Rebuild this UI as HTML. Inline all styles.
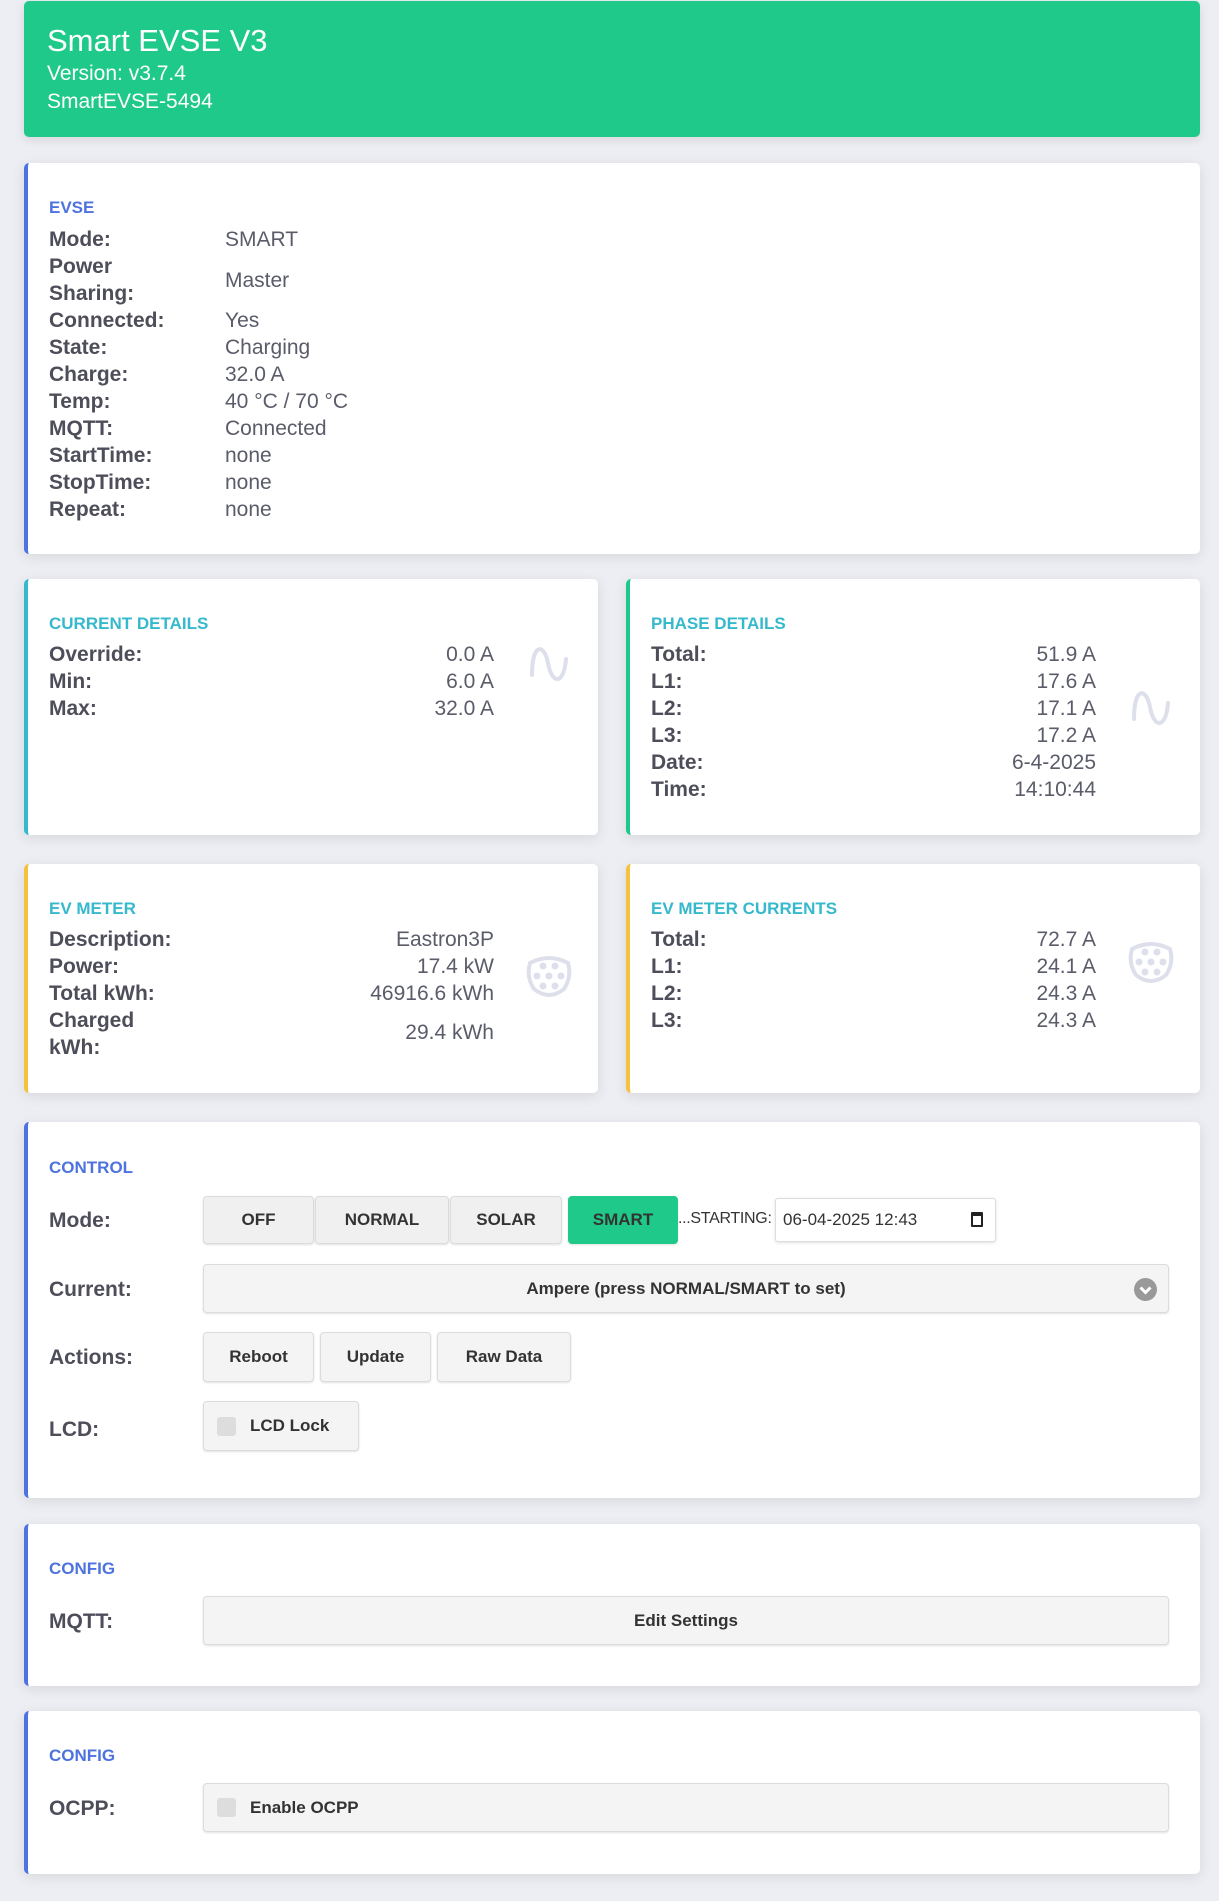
<!DOCTYPE html>
<html><head><meta charset="utf-8"><style>
*{box-sizing:border-box;margin:0;padding:0}
body{width:1219px;height:1901px;background:#eceef3;font-family:"Liberation Sans",sans-serif;color:#5a5c69;position:relative;overflow:hidden}
.card{position:absolute;background:#fff;border-radius:5px;box-shadow:0 3px 12px rgba(58,59,69,.12);border-left:4px solid #4e73df}
.hdr{position:absolute;left:24px;top:1px;width:1176px;height:136px;background:#1fc98a;border-radius:5px;color:#fff;box-shadow:0 3px 10px rgba(0,0,0,.1)}
.hdr .t{position:absolute;left:23px;top:22px;font-size:31px;line-height:36px}
.hdr .v{position:absolute;left:23px;top:60px;font-size:21px;line-height:26px}
.hdr .s{position:absolute;left:23px;top:88px;font-size:21px;line-height:26px}
.ttl{position:absolute;left:21px;font-weight:bold;font-size:17px;text-transform:uppercase}
.blue{color:#4e73df}.teal{color:#36b9cc}
.lab{position:absolute;left:21px;font-weight:bold;font-size:21px;line-height:27px;color:#4d4e59}
.val{position:absolute;font-size:21px;line-height:27px;color:#5a5c69}
.btn{position:absolute;background:#f0f0f0;border:1px solid #dcdcdc;border-radius:4px;box-shadow:0 1px 2px rgba(0,0,0,.12);font-weight:bold;font-size:17px;color:#333;display:flex;align-items:center;justify-content:center}
.row{position:absolute;left:21px;font-weight:bold;font-size:21px;color:#4d4e59}
.cb{display:inline-block;width:19px;height:19px;background:#ddd;border-radius:3px;margin-right:14px}
</style></head><body>
<div class="hdr"><div class="t">Smart EVSE V3</div><div class="v">Version: v3.7.4</div><div class="s">SmartEVSE-5494</div></div>

<div class="card" style="left:24px;top:163px;width:1176px;height:391px">
<div class="ttl blue" style="top:35px">EVSE</div>
<div class="lab" style="top:63px">Mode:</div><div class="val" style="left:197px;top:63px">SMART</div>
<div class="lab" style="top:90px">Power<br>Sharing:</div><div class="val" style="left:197px;top:104px">Master</div>
<div class="lab" style="top:144px">Connected:<br>State:<br>Charge:<br>Temp:<br>MQTT:<br>StartTime:<br>StopTime:<br>Repeat:</div>
<div class="val" style="left:197px;top:144px">Yes<br>Charging<br>32.0 A<br>40 °C / 70 °C<br>Connected<br>none<br>none<br>none</div>
</div>

<div class="card" style="left:24px;top:579px;width:574px;height:256px;border-left-color:#36b9cc">
<div class="ttl teal" style="top:35px">Current Details</div>
<div class="lab" style="top:62px">Override:<br>Min:<br>Max:</div>
<div class="val" style="left:296px;width:170px;text-align:right;top:62px">0.0 A<br>6.0 A<br>32.0 A</div>
<svg style="position:absolute;left:496px;top:62px" width="52" height="48" viewBox="0 0 52 48"><path d="M8 34 C8 2,20 2,24 22 C28 44,40 44,42 18" fill="none" stroke="#dddfeb" stroke-width="4" stroke-linecap="round"/></svg>
</div>

<div class="card" style="left:626px;top:579px;width:574px;height:256px;border-left-color:#1cc88a">
<div class="ttl teal" style="top:35px">Phase Details</div>
<div class="lab" style="top:62px">Total:<br>L1:<br>L2:<br>L3:<br>Date:<br>Time:</div>
<div class="val" style="left:296px;width:170px;text-align:right;top:62px">51.9 A<br>17.6 A<br>17.1 A<br>17.2 A<br>6-4-2025<br>14:10:44</div>
<svg style="position:absolute;left:496px;top:106px" width="52" height="48" viewBox="0 0 52 48"><path d="M8 34 C8 2,20 2,24 22 C28 44,40 44,42 18" fill="none" stroke="#dddfeb" stroke-width="4" stroke-linecap="round"/></svg>
</div>

<div class="card" style="left:24px;top:864px;width:574px;height:229px;border-left-color:#f6c23e">
<div class="ttl teal" style="top:35px">EV Meter</div>
<div class="lab" style="top:62px">Description:<br>Power:<br>Total kWh:<br>Charged<br>kWh:</div>
<div class="val" style="left:266px;width:200px;text-align:right;top:62px">Eastron3P<br>17.4 kW<br>46916.6 kWh</div>
<div class="val" style="left:266px;width:200px;text-align:right;top:155px">29.4 kWh</div>
<svg style="position:absolute;left:498px;top:91px" width="46" height="44" viewBox="0 0 46 44"><path d="M4 8 Q23 -2 42 8 Q46 22 38 34 Q23 46 8 34 Q0 22 4 8Z" fill="none" stroke="#dddfeb" stroke-width="4"/><g fill="#dddfeb"><circle cx="17" cy="11" r="3.5"/><circle cx="29" cy="11" r="3.5"/><circle cx="11" cy="21" r="3.5"/><circle cx="23" cy="21" r="3.5"/><circle cx="35" cy="21" r="3.5"/><circle cx="17" cy="31" r="3.5"/><circle cx="29" cy="31" r="3.5"/></g></svg>
</div>

<div class="card" style="left:626px;top:864px;width:574px;height:229px;border-left-color:#f6c23e">
<div class="ttl teal" style="top:35px">EV Meter Currents</div>
<div class="lab" style="top:62px">Total:<br>L1:<br>L2:<br>L3:</div>
<div class="val" style="left:296px;width:170px;text-align:right;top:62px">72.7 A<br>24.1 A<br>24.3 A<br>24.3 A</div>
<svg style="position:absolute;left:498px;top:77px" width="46" height="44" viewBox="0 0 46 44"><path d="M4 8 Q23 -2 42 8 Q46 22 38 34 Q23 46 8 34 Q0 22 4 8Z" fill="none" stroke="#dddfeb" stroke-width="4"/><g fill="#dddfeb"><circle cx="17" cy="11" r="3.5"/><circle cx="29" cy="11" r="3.5"/><circle cx="11" cy="21" r="3.5"/><circle cx="23" cy="21" r="3.5"/><circle cx="35" cy="21" r="3.5"/><circle cx="17" cy="31" r="3.5"/><circle cx="29" cy="31" r="3.5"/></g></svg>
</div>

<div class="card" style="left:24px;top:1122px;width:1176px;height:376px">
<div class="ttl blue" style="top:36px">Control</div>
<div class="row" style="top:87px">Mode:</div>
<div class="btn" style="left:175px;top:74px;width:111px;height:48px">OFF</div>
<div class="btn" style="left:287px;top:74px;width:134px;height:48px">NORMAL</div>
<div class="btn" style="left:422px;top:74px;width:112px;height:48px">SOLAR</div>
<div class="btn" style="left:540px;top:74px;width:110px;height:48px;background:#1fc98a;border-color:#1fc98a;color:#333">SMART</div>
<div style="position:absolute;left:650px;top:88px;font-size:16px;color:#333;letter-spacing:-0.3px">...STARTING:</div>
<div style="position:absolute;left:747px;top:76px;width:221px;height:44px;border:1px solid #ddd;border-radius:3px;box-shadow:0 1px 3px rgba(0,0,0,.12);font-size:17px;color:#333;padding:11px 0 0 7px">06-04-2025 12:43<span style="position:absolute;right:12px;top:13px;width:12px;height:15px;border:2px solid #222;border-top-width:4px;border-radius:1px"></span></div>
<div class="row" style="top:156px">Current:</div>
<div class="btn" style="left:175px;top:142px;width:966px;height:49px;background:#f4f4f4">Ampere (press NORMAL/SMART to set)<svg style="position:absolute;right:11px;top:13px" width="23" height="23" viewBox="0 0 23 23"><circle cx="11.5" cy="11.5" r="11.5" fill="#999"/><path d="M6.5 9.5 L11.5 14.5 L16.5 9.5" fill="none" stroke="#fff" stroke-width="3"/></svg></div>
<div class="row" style="top:224px">Actions:</div>
<div class="btn" style="left:175px;top:210px;width:111px;height:50px;background:#f4f4f4">Reboot</div>
<div class="btn" style="left:292px;top:210px;width:111px;height:50px;background:#f4f4f4">Update</div>
<div class="btn" style="left:409px;top:210px;width:134px;height:50px;background:#f4f4f4">Raw Data</div>
<div class="row" style="top:296px">LCD:</div>
<div class="btn" style="left:175px;top:279px;width:156px;height:50px;background:#f4f4f4;justify-content:flex-start;padding-left:13px"><span class="cb"></span>LCD Lock</div>
</div>

<div class="card" style="left:24px;top:1524px;width:1176px;height:162px">
<div class="ttl blue" style="top:35px">Config</div>
<div class="row" style="top:86px">MQTT:</div>
<div class="btn" style="left:175px;top:72px;width:966px;height:49px;background:#f4f4f4">Edit Settings</div>
</div>

<div class="card" style="left:24px;top:1711px;width:1176px;height:163px">
<div class="ttl blue" style="top:35px">Config</div>
<div class="row" style="top:86px">OCPP:</div>
<div class="btn" style="left:175px;top:72px;width:966px;height:49px;background:#f4f4f4;justify-content:flex-start;padding-left:13px"><span class="cb"></span>Enable OCPP</div>
</div>
</body></html>
